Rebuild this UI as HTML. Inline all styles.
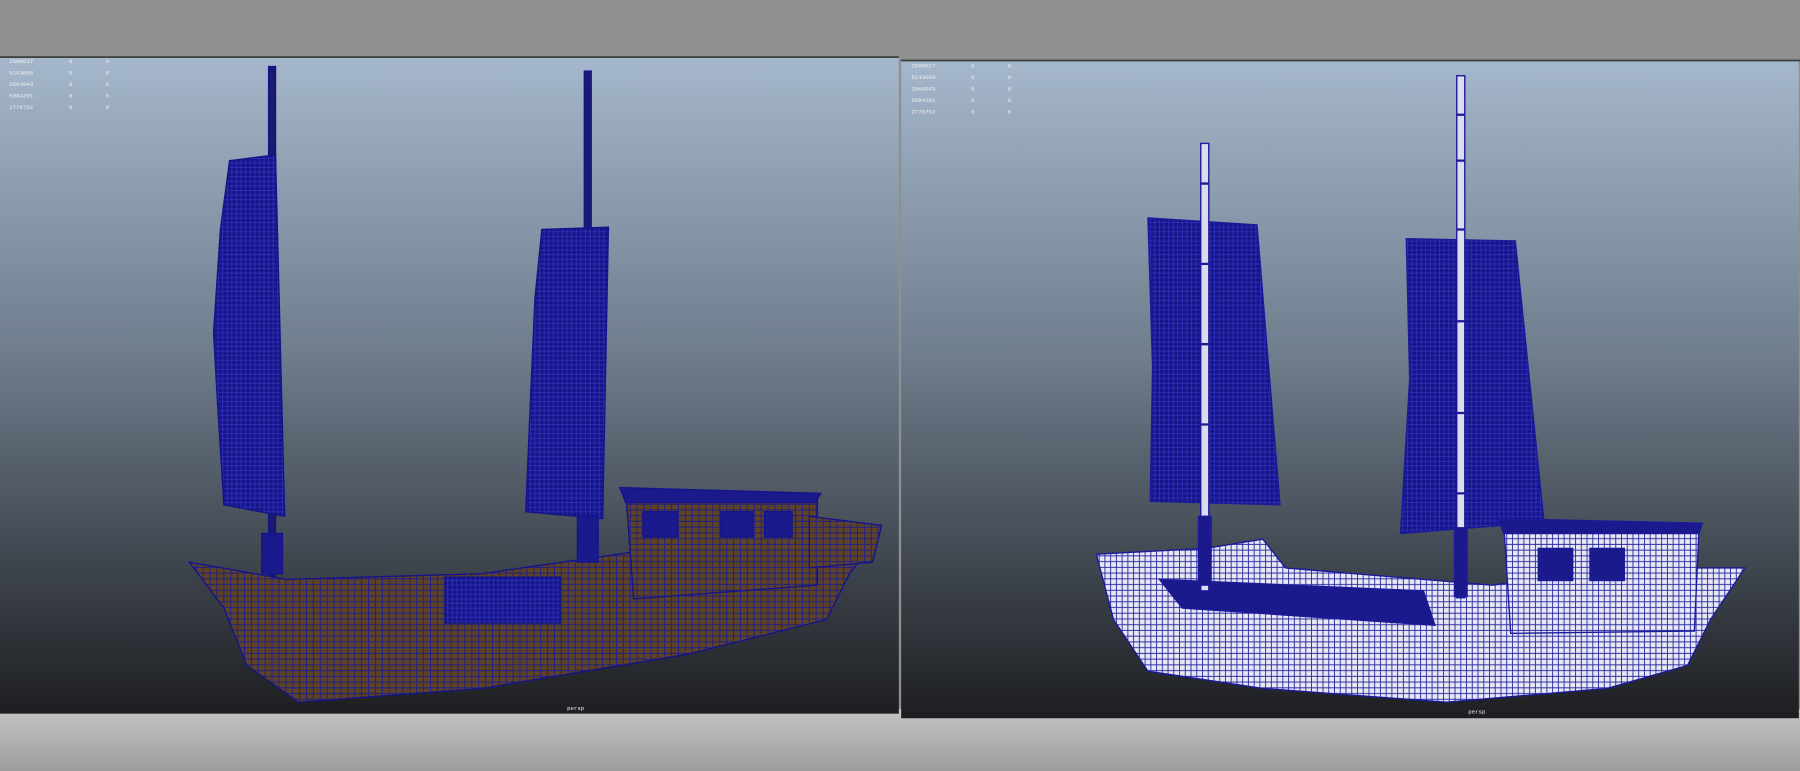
<!DOCTYPE html>
<html><head><style>
body{margin:0;width:1800px;height:771px;overflow:hidden;background:#8f8f8f;font-family:"Liberation Mono",monospace}
svg{display:block}
</style></head><body>
<svg width="1800" height="771" viewBox="0 0 1568 672" preserveAspectRatio="none">
<defs>
<linearGradient id="vp" x1="0" y1="0" x2="0" y2="1">
<stop offset="0" stop-color="#a5b7cc"/><stop offset="0.45" stop-color="#6f7d8d"/><stop offset="1" stop-color="#1d1e21"/></linearGradient>
<linearGradient id="bt" x1="0" y1="0" x2="0" y2="1">
<stop offset="0" stop-color="#c4c4c4"/><stop offset="1" stop-color="#9d9d9d"/></linearGradient>
<pattern id="wire" width="4" height="4" patternUnits="userSpaceOnUse"><rect width="4" height="4" fill="#16168a"/><path d="M0 2H4M2 0V4" stroke="#3a3ac8" stroke-width="0.5"/></pattern>
<pattern id="wood" width="6" height="5" patternUnits="userSpaceOnUse"><rect width="6" height="5" fill="#5e4226"/><path d="M0 4.5H6M3 0V5" stroke="#1e1e86" stroke-width="0.8"/></pattern>
<pattern id="wh" width="5" height="5" patternUnits="userSpaceOnUse"><rect width="5" height="5" fill="#e8e8f4"/><path d="M0 4.5H5M2.5 0V5" stroke="#2a2aa0" stroke-width="0.8"/></pattern>
</defs>
<rect x="0" y="0" width="1568" height="672" fill="#8f8f8f"/>
<rect x="0" y="618" width="1568" height="54" fill="url(#bt)"/>
<rect x="0" y="50" width="783" height="572" fill="url(#vp)"/>
<rect x="785" y="53" width="782" height="573" fill="url(#vp)"/>
<rect x="0" y="49" width="783" height="1.5" fill="#3c3c3c"/>
<rect x="785" y="52" width="783" height="1.5" fill="#3c3c3c"/>
<g fill="#f0f0f0" font-size="5">
<text x="8" y="55">2590017</text><text x="8" y="65">5143068</text><text x="8" y="75">2564043</text><text x="8" y="85">5084201</text><text x="8" y="95">2776752</text>
<text x="60" y="55">0</text><text x="60" y="65">0</text><text x="60" y="75">0</text><text x="60" y="85">0</text><text x="60" y="95">0</text>
<text x="92" y="55">0</text><text x="92" y="65">0</text><text x="92" y="75">0</text><text x="92" y="85">0</text><text x="92" y="95">0</text>
<text x="794" y="59">2590017</text><text x="794" y="69">5143068</text><text x="794" y="79">2564043</text><text x="794" y="89">5084201</text><text x="794" y="99">2776752</text>
<text x="846" y="59">0</text><text x="846" y="69">0</text><text x="846" y="79">0</text><text x="846" y="89">0</text><text x="846" y="99">0</text>
<text x="878" y="59">0</text><text x="878" y="69">0</text><text x="878" y="79">0</text><text x="878" y="89">0</text><text x="878" y="99">0</text>
<text x="494" y="619">persp</text><text x="1279" y="622">persp</text>
</g>
<!-- left ship -->
<g stroke="#14148a" stroke-width="1.2">
<rect x="234" y="58" width="6" height="470" fill="#1a1a70"/>
<rect x="509" y="62" width="6" height="470" fill="#1a1a70"/>
<path d="M200 140L240 135L248 450L195 440L190 360L186 290L192 200Z" fill="url(#wire)"/>
<path d="M472 200L530 198L525 452L458 446L462 350L466 260Z" fill="url(#wire)"/>
<path d="M165 490L250 505L420 500L560 480L700 470L765 468L740 500L720 540L600 570L420 600L260 612L215 580L195 530Z" fill="url(#wood)"/>
<path d="M545 428L712 432L712 510L552 522Z" fill="url(#wood)"/>
<path d="M540 425L715 430L710 438L545 438Z" fill="#1a1a8c"/>
<path d="M705 450L768 458L760 490L705 495Z" fill="url(#wood)"/>
<rect x="388" y="503" width="100" height="40" fill="url(#wire)"/>
<rect x="560" y="446" width="30" height="22" fill="#1a1a8c"/><rect x="628" y="446" width="28" height="22" fill="#1a1a8c"/><rect x="666" y="446" width="24" height="22" fill="#1a1a8c"/>
<rect x="228" y="465" width="18" height="35" fill="#1a1a8c"/>
<rect x="503" y="450" width="18" height="40" fill="#1a1a8c"/>
</g>
<!-- right ship -->
<g stroke="#1a1a9a" stroke-width="1.2">
<path d="M1000 190L1095 196L1115 440L1002 437L1004 320Z" fill="url(#wire)"/>
<path d="M1225 208L1320 210L1345 455L1220 465L1228 330Z" fill="url(#wire)"/>
<path d="M955 483L1050 478L1100 470L1120 495L1300 510L1420 495L1520 495L1490 540L1470 580L1400 600L1260 612L1100 600L1000 585L970 540Z" fill="url(#wh)"/>
<path d="M1310 458L1480 462L1476 550L1316 552Z" fill="url(#wh)"/>
<path d="M1305 452L1483 456L1480 465L1310 465Z" fill="#1a1a8c"/>
<path d="M1010 505L1240 515L1250 545L1030 530Z" fill="#1a1a8c"/>
<rect x="1340" y="478" width="30" height="28" fill="#1a1a8c"/><rect x="1385" y="478" width="30" height="28" fill="#1a1a8c"/>
<rect x="1046" y="125" width="7" height="390" fill="#dcdcec"/>
<rect x="1269" y="66" width="7" height="455" fill="#dcdcec"/>
<path d="M1046 160h7M1046 230h7M1046 300h7M1046 370h7M1269 100h7M1269 140h7M1269 200h7M1269 280h7M1269 360h7M1269 430h7" stroke="#1a1a9a" stroke-width="2"/>
<rect x="1044" y="450" width="11" height="60" fill="#1a1a8c"/>
<rect x="1267" y="460" width="11" height="60" fill="#1a1a8c"/>
</g>
</svg>
</body></html>
